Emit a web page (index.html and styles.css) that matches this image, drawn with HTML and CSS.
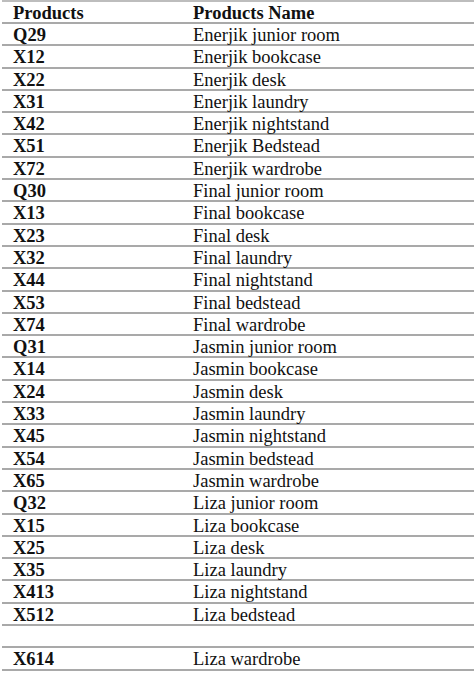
FILE: index.html
```html
<!DOCTYPE html>
<html>
<head>
<meta charset="utf-8">
<link rel="stylesheet" href="styles.css">
</head>
<body>
<div class="table">
  <div class="row head"><div class="code">Products</div><div class="name">Products Name</div></div>
  <div class="row"><div class="code">Q29</div><div class="name">Enerjik junior room</div></div>
  <div class="row"><div class="code">X12</div><div class="name">Enerjik bookcase</div></div>
  <div class="row"><div class="code">X22</div><div class="name">Enerjik desk</div></div>
  <div class="row"><div class="code">X31</div><div class="name">Enerjik laundry</div></div>
  <div class="row"><div class="code">X42</div><div class="name">Enerjik nightstand</div></div>
  <div class="row"><div class="code">X51</div><div class="name">Enerjik Bedstead</div></div>
  <div class="row"><div class="code">X72</div><div class="name">Enerjik wardrobe</div></div>
  <div class="row"><div class="code">Q30</div><div class="name">Final junior room</div></div>
  <div class="row"><div class="code">X13</div><div class="name">Final bookcase</div></div>
  <div class="row"><div class="code">X23</div><div class="name">Final desk</div></div>
  <div class="row"><div class="code">X32</div><div class="name">Final laundry</div></div>
  <div class="row"><div class="code">X44</div><div class="name">Final nightstand</div></div>
  <div class="row"><div class="code">X53</div><div class="name">Final bedstead</div></div>
  <div class="row"><div class="code">X74</div><div class="name">Final wardrobe</div></div>
  <div class="row"><div class="code">Q31</div><div class="name">Jasmin junior room</div></div>
  <div class="row"><div class="code">X14</div><div class="name">Jasmin bookcase</div></div>
  <div class="row"><div class="code">X24</div><div class="name">Jasmin desk</div></div>
  <div class="row"><div class="code">X33</div><div class="name">Jasmin laundry</div></div>
  <div class="row"><div class="code">X45</div><div class="name">Jasmin nightstand</div></div>
  <div class="row"><div class="code">X54</div><div class="name">Jasmin bedstead</div></div>
  <div class="row"><div class="code">X65</div><div class="name">Jasmin wardrobe</div></div>
  <div class="row"><div class="code">Q32</div><div class="name">Liza junior room</div></div>
  <div class="row"><div class="code">X15</div><div class="name">Liza bookcase</div></div>
  <div class="row"><div class="code">X25</div><div class="name">Liza desk</div></div>
  <div class="row"><div class="code">X35</div><div class="name">Liza laundry</div></div>
  <div class="row"><div class="code">X413</div><div class="name">Liza nightstand</div></div>
  <div class="row"><div class="code">X512</div><div class="name">Liza bedstead</div></div>
  <div class="row"><div class="code"></div><div class="name"></div></div>
  <div class="row"><div class="code">X614</div><div class="name">Liza wardrobe</div></div>
</div>
</body>
</html>
```
FILE: styles.css
```css
html, body {
  margin: 0;
  padding: 0;
  background: #ffffff;
}
body {
  font-family: "Liberation Serif", "Times New Roman", serif;
  font-size: 18.5px;
  color: #111111;
}
.table {
  margin-left: 2px;
}
.row {
  display: grid;
  grid-template-columns: 191px 1fr;
  box-sizing: border-box;
  height: 22.3px;
  padding-top: 2px;
  line-height: 18.3px;
  border-bottom: 2px solid #a9a9a9;
  white-space: nowrap;
}
.row.head {
  height: 24px;
  border-top: 2px solid #bdbdbd;
  line-height: 18px;
}
.code {
  padding-left: 11px;
  font-weight: bold;
}
.head .name {
  font-weight: bold;
}
```
